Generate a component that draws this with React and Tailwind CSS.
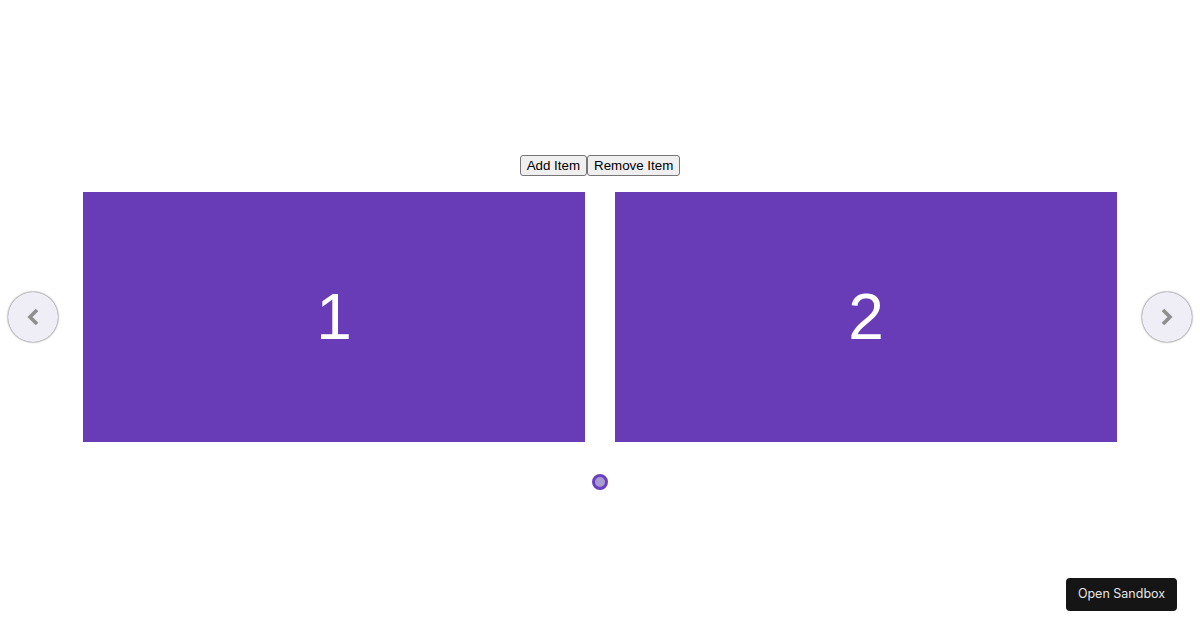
import React from "react";

const items = [1, 2];

const Arrow = ({ dir }) => (
    <button className="w-[50px] h-[50px] shrink-0 rounded-full bg-[#efedf5] shadow-[0_0_2px_0_#333] flex items-center justify-center">
        <svg width="12" height="16" viewBox="0 0 12 16" className={dir === "left" ? "" : "rotate-180"}>
            <path d="M10 1 L3 8 L10 15" fill="none" stroke="#8f8f8f" strokeWidth="3.6" strokeLinejoin="miter" />
        </svg>
    </button>
);

export default function App() {
    return (
        <div className="w-[1200px] h-[630px] bg-white relative font-['Liberation_Sans',Arial,sans-serif]">
            <div className="flex flex-col items-center pt-[155px]">
                <div className="flex">
                    <button className="h-[21px] px-[6px] text-[13.33px] text-black bg-[#efefef] border border-[#767676] rounded-[3px]">Add Item</button>
                    <button className="h-[21px] px-[6px] text-[13.33px] text-black bg-[#efefef] border border-[#767676] rounded-[3px]">Remove Item</button>
                </div>
                <div className="mt-[16px] w-full flex items-center px-[8px] gap-[10px]">
                    <Arrow dir="left" />
                    <div className="flex-1 flex">
                        {items.map((n) => (
                            <div key={n} className="flex-1 mx-[15px] h-[250px] bg-[#683bb7] flex items-center justify-center text-white text-[64px]">
                                {n}
                            </div>
                        ))}
                    </div>
                    <Arrow dir="right" />
                </div>
                <div className="mt-[32px] flex">
                    <div className="w-[16px] h-[16px] rounded-full border-[3px] border-[#6a3fc1] bg-[#a99bcf]" />
                </div>
            </div>
            <button className="absolute left-[1066px] top-[578px] w-[111px] h-[33px] rounded-[4px] bg-[#151515] text-[#e6e6e6] text-[12.5px] font-['Inter',sans-serif]">
                Open Sandbox
            </button>
        </div>
    );
}
